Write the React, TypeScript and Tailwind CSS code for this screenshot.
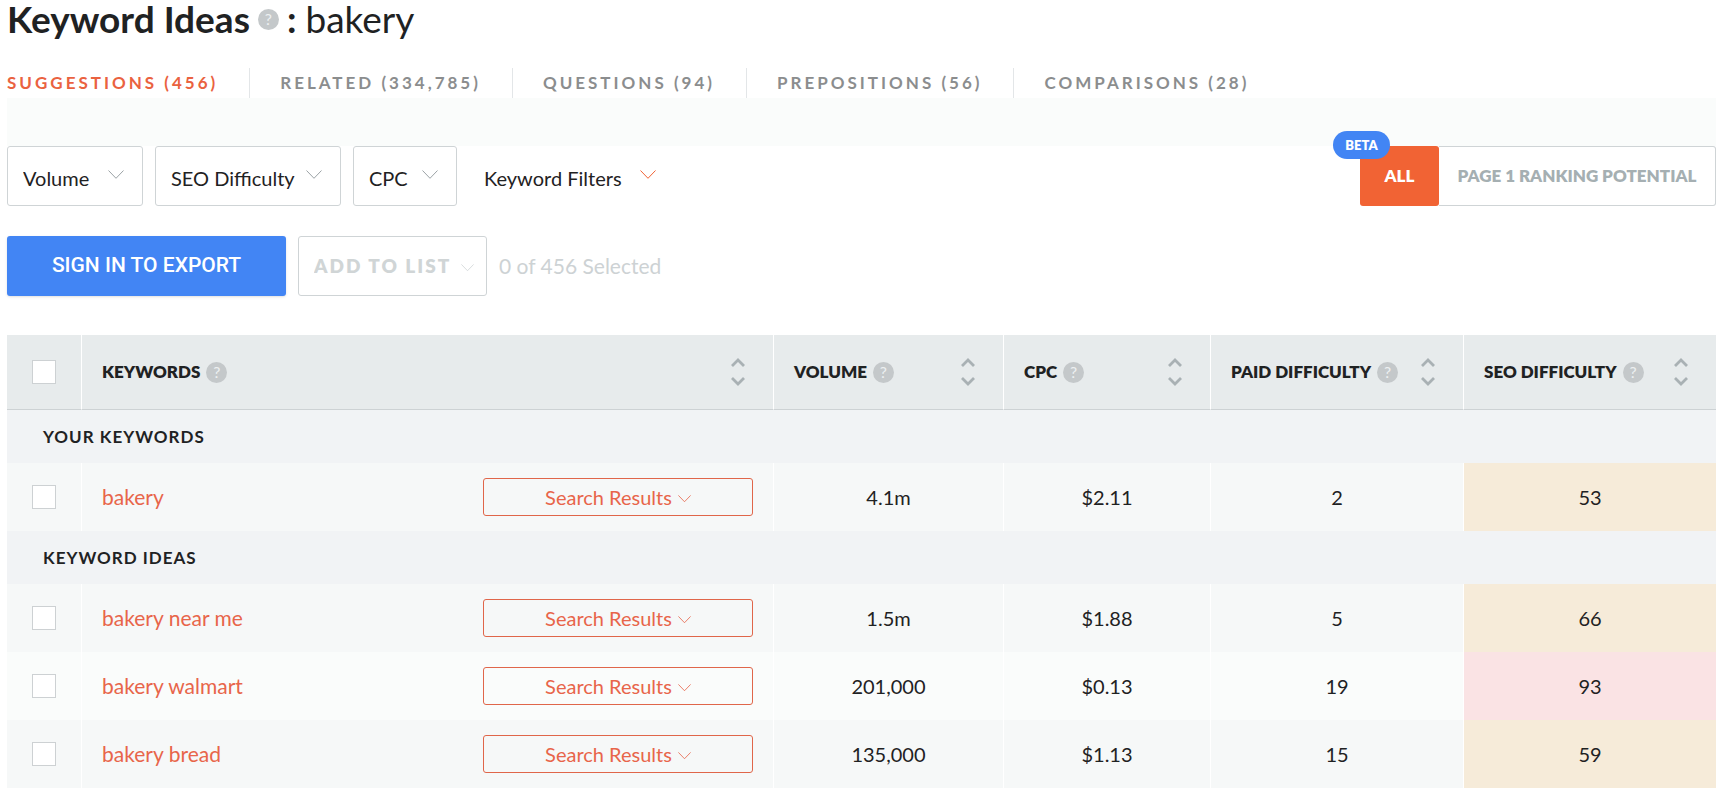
import React, { useState } from 'react';
import clsx from 'clsx';

interface Keyword {
  id: number;
  keyword: string;
  volume: string;
  cpc: string;
  paidDifficulty: number;
  seoDifficulty: number;
}

const tabs = [
  { label: 'Suggestions', count: '456' },
  { label: 'Related', count: '334,785' },
  { label: 'Questions', count: '94' },
  { label: 'Prepositions', count: '56' },
  { label: 'Comparisons', count: '28' },
];

const filters = [
  { label: 'Volume', width: 'w-[136px]' },
  { label: 'SEO Difficulty', width: 'w-[186px]' },
  { label: 'CPC', width: 'w-[104px]' },
];

const columns = ['Keywords', 'Volume', 'CPC', 'Paid Difficulty', 'SEO Difficulty'];

const yourKeywords: Keyword[] = [
  { id: 1, keyword: 'bakery', volume: '4.1m', cpc: '$2.11', paidDifficulty: 2, seoDifficulty: 53 },
];

const keywordIdeas: Keyword[] = [
  { id: 2, keyword: 'bakery near me', volume: '1.5m', cpc: '$1.88', paidDifficulty: 5, seoDifficulty: 66 },
  { id: 3, keyword: 'bakery walmart', volume: '201,000', cpc: '$0.13', paidDifficulty: 19, seoDifficulty: 93 },
  { id: 4, keyword: 'bakery bread', volume: '135,000', cpc: '$1.13', paidDifficulty: 15, seoDifficulty: 59 },
];

const Chevron = ({ className }: { className?: string }) => (
  <svg viewBox="0 0 16 9" fill="none" stroke="currentColor" className={className} aria-hidden="true">
    <path d="M0.5 0.5 8 8.3 15.5 0.5" />
  </svg>
);

const SortArrows = () => (
  <svg viewBox="0 0 14 32" fill="none" stroke="currentColor" strokeWidth="2.8" className="h-8 w-[14px]" aria-hidden="true">
    <path d="M1 10 7 4 13 10M1 22 7 28 13 22" />
  </svg>
);

const HelpIcon = ({ label }: { label: string }) => (
  <button
    aria-label={`About ${label}`}
    className="flex h-[21px] w-[21px] shrink-0 items-center justify-center rounded-full bg-[#c4c8ca] text-base leading-none font-normal text-[#edf0f1]"
  >
    ?
  </button>
);

const Checkbox = ({ label }: { label: string }) => (
  <input
    type="checkbox"
    aria-label={label}
    className="mx-auto block h-6 w-6 appearance-none border border-[#cdd1d3] bg-white checked:bg-[#f16334]"
  />
);

const GroupRow = ({ title }: { title: string }) => (
  <tr className="h-[53px] bg-[#f1f3f5]">
    <th colSpan={6} scope="colgroup" className="pl-9 text-left text-[17px] font-bold uppercase tracking-[1px]">
      {title}
    </th>
  </tr>
);

const KeywordRow = ({ item, striped }: { item: Keyword; striped: boolean }) => (
  <tr className={clsx('h-[68px] text-center', striped ? 'bg-[#f6f8f8]' : 'bg-[#fafcfb]')}>
    <td className="border-r border-white">
      <Checkbox label={`Select ${item.keyword}`} />
    </td>
    <td className="border-r border-white px-5">
      <div className="flex items-center justify-between">
        <a href="#" className="text-[21px] text-[#e8654a]">{item.keyword}</a>
        <button className="flex h-[38px] w-[270px] items-center justify-center gap-[6px] rounded-[3px] border border-[#e0664a] text-[#e8654a]">
          Search Results
          <Chevron className="mt-1 w-[13px]" />
        </button>
      </div>
    </td>
    <td className="border-r border-white">{item.volume}</td>
    <td className="border-r border-white">{item.cpc}</td>
    <td className="border-r border-white">{item.paidDifficulty}</td>
    <td className={item.seoDifficulty > 75 ? 'bg-[#fae3e4]' : 'bg-[#f6ebd9]'}>{item.seoDifficulty}</td>
  </tr>
);

const App: React.FC = () => {
  const [activeTab, setActiveTab] = useState('Suggestions');
  const [onlyPotential, setOnlyPotential] = useState(false);

  return (
    <main className="bg-white px-[7px] font-[Lato,sans-serif] text-xl text-[#1f2223]">
      <h1 className="flex h-[38px] items-center gap-2 text-[37px] leading-[38px] font-bold">
        Keyword Ideas
        <HelpIcon label="keyword ideas" />
        <span>
          : <span className="font-normal">bakery</span>
        </span>
      </h1>

      {/* Tabs */}
      <nav className="mt-[30px] flex h-[30px]">
        {tabs.map(tab => (
          <button
            key={tab.label}
            onClick={() => setActiveTab(tab.label)}
            className={clsx(
              'border-l border-[#e3e6e8] pr-[31px] pl-[30px] text-[17px] font-bold uppercase tracking-[3px] first:border-l-0 first:pl-0',
              tab.label === activeTab ? 'text-[#ea6240]' : 'text-[#8b8d8e]'
            )}
          >
            {tab.label} ({tab.count})
          </button>
        ))}
      </nav>
      <div className="h-12 bg-[#fafcfb]" />

      {/* Filters */}
      <div className="flex items-center justify-between">
        <div className="flex gap-3">
          {filters.map(filter => (
            <div key={filter.label} className={clsx('relative', filter.width)}>
              <select
                aria-label={filter.label}
                className="h-[60px] w-full appearance-none rounded-[3px] border border-[#cfd4d6] bg-white pt-1 pl-[15px]"
              >
                <option>{filter.label}</option>
              </select>
              <Chevron className="pointer-events-none absolute top-6 right-[19px] w-4 text-[#9ba2a5]" />
            </div>
          ))}
          <div className="relative w-[187px]">
            <select aria-label="Keyword Filters" className="h-[60px] w-full appearance-none pt-1 pl-[15px]">
              <option>Keyword Filters</option>
            </select>
            <Chevron className="pointer-events-none absolute top-6 right-0 w-4 text-[#f16334]" />
          </div>
        </div>

        <div className="relative flex h-[60px] text-[17px] font-extrabold">
          <span className="absolute -top-[15px] -left-[27px] flex h-7 w-[57px] items-center justify-center rounded-full bg-[#4285f4] text-[13px] text-white">
            BETA
          </span>
          <button
            aria-pressed={!onlyPotential}
            onClick={() => setOnlyPotential(false)}
            className="w-[79px] rounded-[3px] bg-[#f16334] text-white"
          >
            ALL
          </button>
          <button
            aria-pressed={onlyPotential}
            onClick={() => setOnlyPotential(true)}
            className="w-[277px] rounded-r-[3px] border border-l-0 border-[#cfd4d6] text-[#a5afb2]"
          >
            PAGE 1 RANKING POTENTIAL
          </button>
        </div>
      </div>

      {/* Actions */}
      <div className="mt-[30px] flex items-center gap-3">
        <button className="h-[60px] w-[279px] rounded-[3px] bg-[#4285f4] font-[Roboto,sans-serif] text-[21px] font-medium text-white shadow-sm">
          SIGN IN TO EXPORT
        </button>
        <div className="relative w-[189px] text-[#d0d5d6]">
          <select
            aria-label="Add to list"
            disabled
            className="h-[60px] w-full appearance-none rounded-[3px] border border-[#cfd4d6] pl-[15px] text-[19px] font-extrabold tracking-[2px] opacity-100"
          >
            <option>ADD TO LIST</option>
          </select>
          <Chevron className="pointer-events-none absolute top-7 right-[13px] w-[13px]" />
        </div>
        <p className="text-[21px] text-[#cdd2d4]">0 of 456 Selected</p>
      </div>

      {/* Results */}
      <table className="mt-[39px] w-full table-fixed border-separate border-spacing-0">
        <colgroup>
          <col className="w-[75px]" />
          <col />
          <col className="w-[230px]" />
          <col className="w-[207px]" />
          <col className="w-[253px]" />
          <col className="w-[252px]" />
        </colgroup>
        <thead>
          <tr className="h-[75px] bg-[#e7ebec]">
            <th className="border-r border-b border-r-white border-b-[#cdd2d4]">
              <Checkbox label="Select all keywords" />
            </th>
            {columns.map(column => (
              <th
                key={column}
                scope="col"
                className="border-r border-b border-r-white border-b-[#cdd2d4] pr-7 pl-5 text-[17px] font-extrabold uppercase last:border-r-0"
              >
                <div className="flex items-center gap-[6px] whitespace-nowrap">
                  {column}
                  <HelpIcon label={column} />
                  <button aria-label={`Sort by ${column}`} className="ml-auto text-[#a9b1b4]">
                    <SortArrows />
                  </button>
                </div>
              </th>
            ))}
          </tr>
        </thead>
        <tbody>
          <GroupRow title="Your Keywords" />
          {yourKeywords.map((item, index) => (
            <KeywordRow key={item.id} item={item} striped={index % 2 === 0} />
          ))}
          <GroupRow title="Keyword Ideas" />
          {keywordIdeas.map((item, index) => (
            <KeywordRow key={item.id} item={item} striped={index % 2 === 0} />
          ))}
        </tbody>
      </table>
    </main>
  );
};

export default App;
